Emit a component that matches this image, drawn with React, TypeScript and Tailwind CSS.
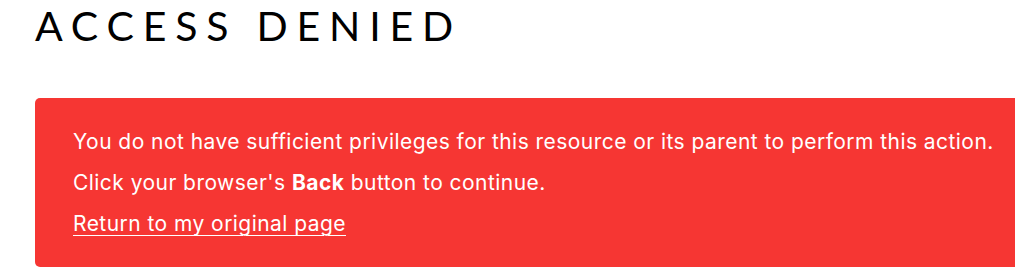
export default function App() {
  return (
    <div className="w-[1015px] h-[277px] overflow-hidden bg-white pl-[35px] font-['Lato',sans-serif]">
      <h1 className="pt-[1px] text-[41px] leading-[50px] font-normal tracking-[0.215em] text-black">
        ACCESS DENIED
      </h1>
      <div className="mt-[47px] w-[1100px] h-[169px] rounded-[5px] bg-[#f63633] pl-[38px] pt-[23px] font-['Inter',sans-serif] text-[21px] leading-[41px] tracking-[0.45px] text-white">
        <p>You do not have sufficient privileges for this resource or its parent to perform this action.</p>
        <p>
          Click your browser's <strong className="font-bold">Back</strong> button to continue.
        </p>
        <p>
          <a href="#" className="underline underline-offset-[4px] decoration-1">
            Return to my original page
          </a>
        </p>
      </div>
    </div>
  );
}
